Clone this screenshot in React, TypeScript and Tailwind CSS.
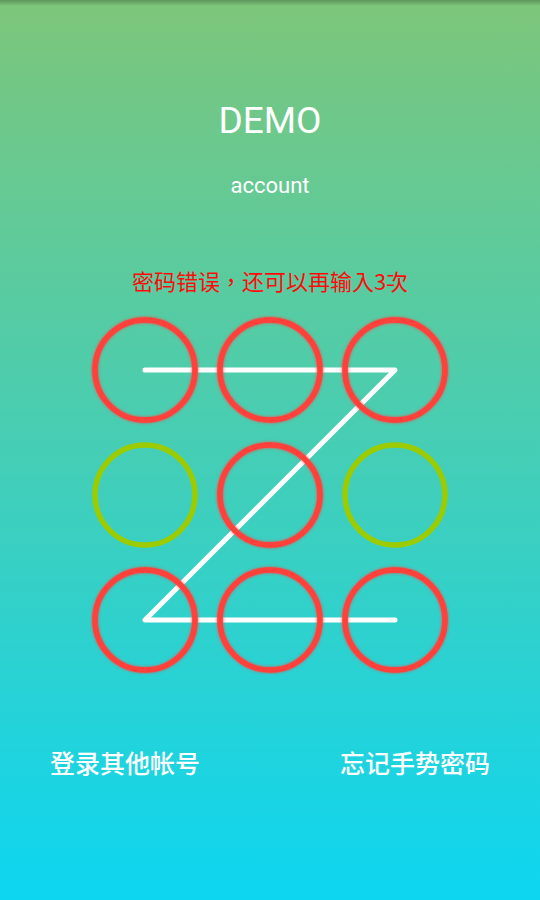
const cells = [
  { x: 55, y: 55, hit: true },
  { x: 180, y: 55, hit: true },
  { x: 305, y: 55, hit: true },
  { x: 55, y: 180, hit: false },
  { x: 180, y: 180, hit: true },
  { x: 305, y: 180, hit: false },
  { x: 55, y: 305, hit: true },
  { x: 180, y: 305, hit: true },
  { x: 305, y: 305, hit: true },
]

function PatternLock() {
  return (
    <svg width="360" height="360" viewBox="0 0 360 360" className="mx-auto mt-[24px] block">
      <defs>
        <filter id="glow" x="-20%" y="-20%" width="140%" height="140%">
          <feGaussianBlur in="SourceGraphic" stdDeviation="1.8" result="blur" />
          <feMerge>
            <feMergeNode in="blur" />
            <feMergeNode in="SourceGraphic" />
          </feMerge>
        </filter>
        <filter id="soft" x="-20%" y="-20%" width="140%" height="140%">
          <feGaussianBlur stdDeviation="0.6" />
        </filter>
      </defs>
      <polyline
        points="55,55 305,55 55,305 305,305"
        fill="none"
        stroke="#ffffff"
        strokeWidth="5"
        strokeLinecap="round"
        strokeLinejoin="round"
      />
      {cells.map((c, i) => (
        <circle
          key={i}
          cx={c.x}
          cy={c.y}
          r="50"
          fill="none"
          stroke={c.hit ? '#ff403a' : '#9ccc02'}
          strokeWidth="5.5"
          filter={c.hit ? 'url(#glow)' : 'url(#soft)'}
        />
      ))}
    </svg>
  )
}

export default function App() {
  return (
    <div className="relative min-h-[900px] w-full overflow-hidden bg-[linear-gradient(to_bottom,#7dc67a,#0dd6f1)] font-['Roboto','Noto_Sans_CJK_SC',sans-serif]">
      {/* status bar shadow */}
      <div className="pointer-events-none absolute inset-x-0 top-0 h-[6px] bg-gradient-to-b from-black/25 to-transparent"></div>

      <div className="flex flex-col items-center pt-[102px]">
        <h1 className="text-[37px] leading-none text-white font-normal">DEMO</h1>
        <p className="mt-[36px] text-[22px] leading-none text-white">account</p>
        <p className="mt-[72px] text-[22px] leading-none text-[#ff0a0a] font-['Noto_Sans_CJK_TC',sans-serif]">
          密码错误，还可以再输入3次
        </p>
      </div>

      <PatternLock />

      <div className="mt-[75px] flex justify-between px-[50px] font-['Noto_Sans_CJK_SC',sans-serif] text-[25px] leading-none font-medium text-white">
        <span>登录其他帐号</span>
        <span>忘记手势密码</span>
      </div>
    </div>
  )
}
